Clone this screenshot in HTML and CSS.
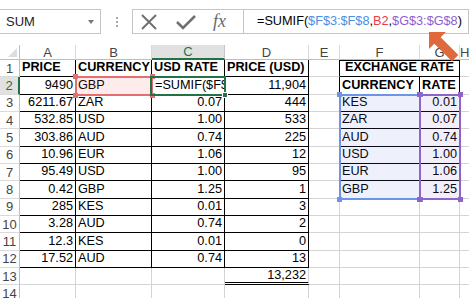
FILE: index.html
```html
<!DOCTYPE html>
<html lang="en">
  <head>
    <meta charset="UTF-8" />
    <title>SUMIF exchange rate</title>
    <link rel="stylesheet" href="styles.css">
  </head>
  <body>
    <div class="formula-bar">
      <div class="name-box">
        <span>SUM</span>
        <span class="caret"></span>
      </div>
      <div class="grip"><i></i><i></i><i></i></div>
      <div class="fx-buttons">
        <svg class="icon-cancel" width="18" height="16" viewBox="0 0 18 16">
          <path d="M2 1 L16 15 M16 1 L2 15" />
        </svg>
        <svg class="icon-enter" width="20" height="16" viewBox="0 0 20 16">
          <path d="M1 8 L7 14 L19 2" />
        </svg>
        <span class="fx">fx</span>
      </div>
      <div class="formula-input">=SUMIF(<span class="ref-blue">$F$3:$F$8</span>,<span class="ref-red">B2</span>,<span class="ref-purple">$G$3:$G$8</span>)</div>
    </div>

    <div class="sheet-stack">
      <div id="sheet-grid" class="sheet-grid"></div>

      <!-- range highlights, same track sizes as the sheet -->
      <div class="range-layer">
        <div class="range range-red"><i class="handle tl"></i><i class="handle tr"></i><i class="handle bl"></i><i class="handle br"></i></div>
        <div class="range range-blue"><i class="handle tl"></i><i class="handle tr"></i><i class="handle bl"></i><i class="handle br"></i></div>
        <div class="range range-purple"><i class="handle tl"></i><i class="handle tr"></i><i class="handle bl"></i><i class="handle br"></i></div>
        <div class="range range-active"><i class="handle br"></i></div>
      </div>
    </div>

    <svg class="pointer" width="469" height="298" viewBox="0 0 469 298">
      <g transform="translate(429 32) rotate(225)">
        <polygon points="0,0 -12,-12 -12,-4.5 -37,-4.5 -37,4.5 -12,4.5 -12,12" />
      </g>
    </svg>

    <script>
      document.addEventListener("DOMContentLoaded", () => {
        const grid = document.getElementById("sheet-grid");
        const COLS = ["A", "B", "C", "D", "E", "F", "G", "H"];
        const ROW_COUNT = 14;

        // A..G, one array per sheet row
        const rows = [
          ["PRICE", "CURRENCY", "USD RATE", "PRICE (USD)", "", "EXCHANGE RATE", ""],
          ["9490", "GBP", "=SUMIF($F$", "11,904", "", "CURRENCY", "RATE"],
          ["6211.67", "ZAR", "0.07", "444", "", "KES", "0.01"],
          ["532.85", "USD", "1.00", "533", "", "ZAR", "0.07"],
          ["303.86", "AUD", "0.74", "225", "", "AUD", "0.74"],
          ["10.96", "EUR", "1.06", "12", "", "USD", "1.00"],
          ["95.49", "USD", "1.00", "95", "", "EUR", "1.06"],
          ["0.42", "GBP", "1.25", "1", "", "GBP", "1.25"],
          ["285", "KES", "0.01", "3"],
          ["3.28", "AUD", "0.74", "2"],
          ["12.3", "KES", "0.01", "0"],
          ["17.52", "AUD", "0.74", "13"],
          ["", "", "", "13,232"],
          [],
        ];

        const isNumber = (v) => /^[\d.,]+$/.test(v);
        const make = (cls, text) => {
          const el = document.createElement("div");
          el.className = cls;
          if (text) el.textContent = text;
          grid.appendChild(el);
          return el;
        };

        make("corner");
        COLS.forEach((c) => make("col-head" + (c === "C" ? " active" : ""), c));

        for (let r = 1; r <= ROW_COUNT; r++) {
          make("row-head" + (r === 2 ? " active" : ""), String(r));
          const values = rows[r - 1] || [];

          COLS.forEach((col, i) => {
            if (r === 1 && col === "G") return; // F1:G1 merged
            const value = values[i] || "";
            const cls = ["cell"];
            const inMain = i <= 3 && r <= 12;
            const inRates = (col === "F" || col === "G") && r <= 8;

            if (isNumber(value)) cls.push("num");
            if (r === 1 || (r === 2 && inRates)) cls.push("bold");
            if (inMain || inRates) cls.push("line-b");
            if (inMain || inRates || (col === "E" && r <= 2)) cls.push("line-r");
            if (r === 1 && col === "F") cls.push("merged", "line-t");
            if (r === 13 && col === "D") cls.push("double-b");
            if (r === 2 && col === "C") cls.push("formula");

            make(cls.join(" "), value);
          });
        }
      });
    </script>
  </body>
</html>
```

FILE: styles.css
```css
/* sheet screenshot */

* {
  margin: 0;
  padding: 0;
  box-sizing: border-box;
}

body {
  width: 469px;
  height: 298px;
  overflow: hidden;
  position: relative;
  background-color: #fff;
  font-family: "Liberation Sans", Arial, sans-serif;
  color: #000;
}

/* formula bar */
.formula-bar {
  display: flex;
  align-items: flex-start;
  height: 45px;
  padding-top: 9px;
}

.name-box {
  width: 101px;
  height: 25px;
  border: 1px solid #c6c6c6;
  border-left: none;
  display: flex;
  align-items: center;
  justify-content: space-between;
  padding: 0 6px 0 6px;
  font-size: 13px;
  color: #222;
}

.caret {
  width: 0;
  height: 0;
  border-left: 3px solid transparent;
  border-right: 3px solid transparent;
  border-top: 4px solid #777;
}

.grip {
  width: 31px;
  height: 25px;
  display: flex;
  flex-direction: column;
  align-items: center;
  justify-content: center;
  gap: 2px;
}

.grip i {
  width: 2px;
  height: 2px;
  background-color: #a8a8a8;
}

.fx-buttons {
  width: 112px;
  height: 25px;
  border: 1px solid #c6c6c6;
  display: flex;
  align-items: center;
  padding-left: 7px;
}

.fx-buttons svg {
  fill: none;
  stroke: #707070;
}

.icon-cancel {
  stroke-width: 2;
}

.icon-enter {
  stroke-width: 2.6;
  margin-left: 18px;
}

.fx {
  margin-left: 17px;
  font-family: "Liberation Serif", "Times New Roman", serif;
  font-style: italic;
  font-size: 18px;
  color: #6a6a6a;
  line-height: 1;
  padding-bottom: 2px;
}

.formula-input {
  flex: 1;
  height: 25px;
  border: 1px solid #c6c6c6;
  border-left: none;
  padding-left: 13px;
  font-size: 12.7px;
  line-height: 23px;
  white-space: nowrap;
}

.ref-blue {
  color: #4a8fe2;
}

.ref-red {
  color: #e8403f;
}

.ref-purple {
  color: #8e5fd0;
}

/* grid */
.sheet-stack {
  display: grid;
}

.sheet-grid,
.range-layer {
  grid-area: 1 / 1;
  display: grid;
  grid-template-columns: 20px 56px 76px 73px 84px 31px 80px 40px 1fr;
  grid-template-rows: 15px repeat(14, 17.33px);
}

.range-layer {
  pointer-events: none;
}

.corner {
  position: relative;
  border-right: 1px solid #bdbdbd;
  border-bottom: 1px solid #bdbdbd;
}

.corner::after {
  content: "";
  position: absolute;
  right: 2px;
  bottom: 2px;
  border-left: 9px solid transparent;
  border-bottom: 9px solid #dcdcdc;
}

.col-head {
  display: flex;
  align-items: center;
  justify-content: center;
  font-size: 13px;
  color: #444;
  border-right: 1px solid #dadada;
  border-bottom: 1px solid #bdbdbd;
}

.col-head.active {
  background-color: #e1e1e1;
  color: #217346;
  border-bottom: 2px solid #217346;
  border-right-color: #c6c6c6;
}

.row-head {
  display: flex;
  align-items: center;
  justify-content: center;
  font-size: 13px;
  color: #444;
  border-right: 1px solid #bdbdbd;
  border-bottom: 1px solid #dadada;
}

.row-head.active {
  background-color: #e1e1e1;
  color: #217346;
  border-right: 2px solid #217346;
}

.cell {
  display: flex;
  align-items: flex-end;
  padding: 0 2px 1px 2px;
  font-size: 12.7px;
  line-height: 15px;
  white-space: nowrap;
  overflow: hidden;
  border-right: 1px solid #d4d4d4;
  border-bottom: 1px solid #d4d4d4;
}

.cell.num {
  justify-content: flex-end;
}

.cell.bold {
  font-weight: bold;
}

.cell.line-r {
  border-right-color: #000;
}

.cell.line-b {
  border-bottom-color: #000;
}

.cell.line-t {
  box-shadow: inset 0 1px 0 #000;
}

.cell.merged {
  grid-column: span 2;
  justify-content: center;
}

.cell.double-b {
  border-bottom: 3px double #000;
  padding-bottom: 0;
  line-height: 14px;
}

.cell.formula {
  padding-left: 3px;
}

/* reference highlights */
.range {
  position: relative;
  border: 2px solid;
  margin: -1px -1px -1px -1px;
}

.range-red {
  grid-column: 3;
  grid-row: 3;
  border-color: #e46e70;
  background-color: rgba(232, 64, 63, 0.1);
}

.range-blue {
  grid-column: 7;
  grid-row: 4 / 10;
  border-color: #6f93e8;
  background-color: rgba(90, 120, 220, 0.1);
}

.range-purple {
  grid-column: 8;
  grid-row: 4 / 10;
  border-color: #8f63c7;
  background-color: rgba(142, 95, 208, 0.1);
}

.range-active {
  grid-column: 4;
  grid-row: 3;
  border-color: #217346;
  margin-left: -2px;
}

.handle {
  position: absolute;
  width: 5px;
  height: 5px;
}

.range-red .handle {
  background-color: #e46e70;
}

.range-blue .handle {
  background-color: #6f93e8;
}

.range-purple .handle {
  background-color: #8f63c7;
}

.range-active .handle {
  width: 6px;
  height: 6px;
  background-color: #217346;
  border: 1px solid #fff;
}

.handle.tl {
  top: -4px;
  left: -4px;
}

.handle.tr {
  top: -4px;
  right: -4px;
}

.handle.bl {
  bottom: -4px;
  left: -4px;
}

.handle.br {
  bottom: -4px;
  right: -4px;
}

/* callout arrow */
.pointer {
  position: absolute;
  top: 0;
  left: 0;
  pointer-events: none;
  z-index: 5;
}

.pointer polygon {
  fill: #e0683d;
}
```
